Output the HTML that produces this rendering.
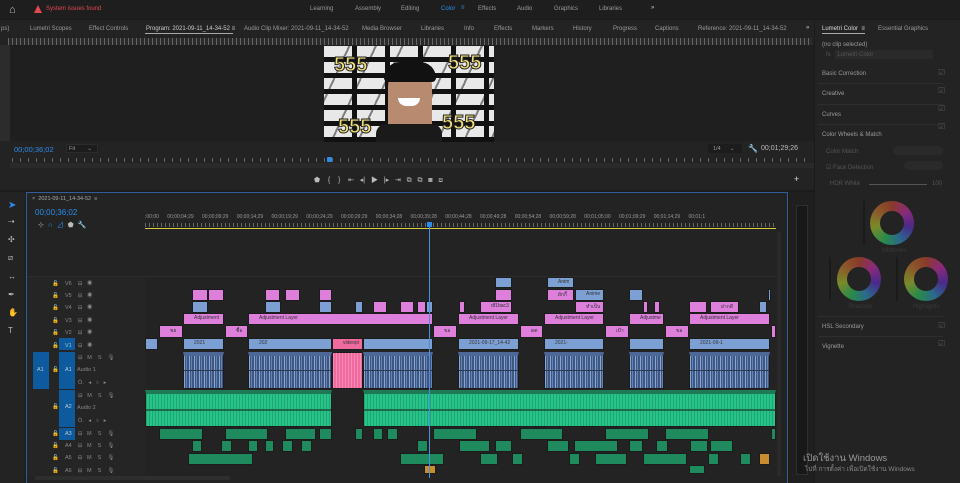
<!DOCTYPE html>
<html><head><meta charset="utf-8"><style>
*{margin:0;padding:0;box-sizing:border-box}
body{width:960px;height:483px;overflow:hidden;background:#1b1b1b;font-family:"Liberation Sans","Noto Sans CJK SC",sans-serif;color:#9a9a9a;position:relative;font-size:6px}
.a{position:absolute}
.t{position:absolute;white-space:nowrap}
.p{position:absolute;background:#de7fdc;border:1px solid #1c1c1c}
.b{position:absolute;background:#7c9fd4;border:1px solid #1c1c1c}
.ab{position:absolute;background:#3f5680;border:1px solid #1c1c1c;border-top:4px solid #4d6796;background-image:repeating-linear-gradient(90deg,rgba(140,175,225,.9) 0 1px,transparent 1px 2px,rgba(140,175,225,.5) 2px 3px,transparent 3px 5px);background-size:100% 60%;background-repeat:repeat-y}
.ab::after{content:"";position:absolute;left:0;right:0;top:45%;height:1px;background:#2a3a55}
.g{position:absolute;background:#27c48a;border:1px solid #1c1c1c;border-top:4px solid #1e7a55;background-image:repeating-linear-gradient(90deg,rgba(20,110,70,.35) 0 1px,transparent 1px 3px)}
.g::after{content:"";position:absolute;left:0;right:0;top:46%;height:2px;background:#1e6b4c}
.gs{position:absolute;background:#1f8a5e;border:1px solid #1c1c1c}
.o{position:absolute;background:#c88d2e;border:1px solid #1c1c1c}
.pk{position:absolute;background:#f06aa0;border:1px solid #1c1c1c}
.lbl{position:absolute;left:10px;top:1px;font-size:5px;color:#333;white-space:nowrap;overflow:hidden}
.hd{position:absolute;font-size:5.5px;color:#888}
.wh{position:absolute;width:44px;height:44px;border-radius:50%;background:conic-gradient(#8a3a2a,#8a2a7a,#4a2a8a,#2a6a8a,#2a8a4a,#7a8a2a,#8a5a2a,#8a3a2a)}
.wh::after{content:"";position:absolute;left:10px;top:10px;width:24px;height:24px;border-radius:50%;background:#232323}
</style></head><body>
<div class="a" style="left:0;top:0;width:960px;height:19px;background:#1e1e1e"></div>
<div class="t" style="left:9px;top:4px;font-size:11px;color:#bbb">⌂</div>
<div class="a" style="left:34px;top:5px;width:0;height:0;border-left:4px solid transparent;border-right:4px solid transparent;border-bottom:8px solid #e34850"></div>
<div class="t" style="left:46px;top:6px;color:#e34850;font-size:6px">System issues found</div>
<div class="t" style="left:310px;top:6px">Learning</div>
<div class="t" style="left:355px;top:6px">Assembly</div>
<div class="t" style="left:401px;top:6px">Editing</div>
<div class="t" style="left:441px;top:6px;color:#2d8ceb">Color</div>
<div class="t" style="left:461px;top:5px;color:#2d8ceb">≡</div>
<div class="t" style="left:478px;top:6px">Effects</div>
<div class="t" style="left:517px;top:6px">Audio</div>
<div class="t" style="left:554px;top:6px">Graphics</div>
<div class="t" style="left:599px;top:6px">Libraries</div>
<div class="t" style="left:651px;top:5px;color:#ccc">»</div>
<div class="a" style="left:0;top:20px;width:814px;height:170px;background:#232323"></div>
<div class="t" style="left:1px;top:26px">ps)</div>
<div class="t" style="left:30px;top:26px">Lumetri Scopes</div>
<div class="t" style="left:89px;top:26px">Effect Controls</div>
<div class="t" style="left:146px;top:26px;color:#ccc">Program: 2021-09-11_14-34-52 ≡</div>
<div class="a" style="left:145px;top:33px;width:88px;height:1px;background:#aaa"></div>
<div class="t" style="left:244px;top:26px">Audio Clip Mixer: 2021-09-11_14-34-52</div>
<div class="t" style="left:362px;top:26px">Media Browser</div>
<div class="t" style="left:421px;top:26px">Libraries</div>
<div class="t" style="left:464px;top:26px">Info</div>
<div class="t" style="left:494px;top:26px">Effects</div>
<div class="t" style="left:532px;top:26px">Markers</div>
<div class="t" style="left:573px;top:26px">History</div>
<div class="t" style="left:613px;top:26px">Progress</div>
<div class="t" style="left:655px;top:26px">Captions</div>
<div class="t" style="left:698px;top:26px">Reference: 2021-09-11_14-34-52</div>
<div class="t" style="left:806px;top:25px;color:#ccc">»</div>
<div class="a" style="left:8px;top:38px;width:804px;height:7px;background:#2c2c2c;background-image:repeating-linear-gradient(90deg,#777 0 1px,transparent 1px 4px);opacity:.8"></div>
<div class="a" style="left:0;top:45px;width:10px;height:96px;background:#2c2c2c"></div>
<div class="a" style="left:10px;top:45px;width:804px;height:96px;background:#1f1f1f"></div>
<div class="a" style="left:324px;top:46px;width:170px;height:96px;background:#111;background-image:repeating-linear-gradient(90deg,#e8e8e8 0 28px,#111 28px 33px);overflow:hidden">
<div class="a" style="left:0;top:0;width:170px;height:96px;background-image:repeating-linear-gradient(180deg,transparent 0 11px,#111 11px 16px)"></div>
<div class="a" style="left:0;top:0;width:170px;height:96px;background-image:repeating-linear-gradient(115deg,transparent 0 22px,rgba(20,20,20,.5) 22px 24px)"></div>
<div class="a" style="left:64px;top:22px;width:44px;height:74px;background:#b88a70;border-radius:18px 18px 0 0"></div>
<div class="a" style="left:60px;top:16px;width:52px;height:20px;background:#111;border-radius:24px 24px 6px 6px"></div>
<div class="a" style="left:74px;top:52px;width:22px;height:8px;background:#fff;border-radius:0 0 10px 10px"></div>
<div class="a" style="left:52px;top:78px;width:66px;height:18px;background:#1a1a1a;border-radius:10px 10px 0 0"></div>
<div class="t" style="left:10px;top:8px;font-size:20px;font-weight:bold;color:#f3e27a;-webkit-text-stroke:1px #222">555</div>
<div class="t" style="left:124px;top:6px;font-size:20px;font-weight:bold;color:#f3e27a;-webkit-text-stroke:1px #222">555</div>
<div class="t" style="left:14px;top:70px;font-size:20px;font-weight:bold;color:#f3e27a;-webkit-text-stroke:1px #222">555</div>
<div class="t" style="left:118px;top:66px;font-size:20px;font-weight:bold;color:#f3e27a;-webkit-text-stroke:1px #222">555</div>
</div>
<div class="t" style="left:14px;top:145px;font-size:7.5px;color:#2d8ceb">00;00;36;02</div>
<div class="a" style="left:66px;top:144px;width:32px;height:9px;background:#1c1c1c;border:1px solid #2b2b2b"></div>
<div class="t" style="left:69px;top:146px;font-size:5.5px">Fit &nbsp; &nbsp; &nbsp; &nbsp;⌄</div>
<div class="a" style="left:708px;top:144px;width:34px;height:9px;background:#1c1c1c"></div>
<div class="t" style="left:713px;top:146px;font-size:5.5px">1/4 &nbsp; &nbsp; &nbsp;⌄</div>
<div class="t" style="left:748px;top:144px;font-size:8px;color:#bbb">🔧</div>
<div class="t" style="left:761px;top:145px;font-size:7px;color:#bbb">00;01;29;26</div>
<div class="a" style="left:12px;top:158px;width:800px;height:4px;background-image:repeating-linear-gradient(90deg,#666 0 1px,transparent 1px 8px)"></div>
<div class="a" style="left:10px;top:163px;width:804px;height:5px;background:#2a2a2a"></div>
<div class="a" style="left:327px;top:157px;width:5px;height:5px;background:#2d8ceb;border-radius:1px"></div>
<div class="t" style="left:314px;top:175px;font-size:7px;color:#bbb">⬟&nbsp;&nbsp;&nbsp;&nbsp;{&nbsp;&nbsp;&nbsp;&nbsp;}&nbsp;&nbsp;&nbsp;&nbsp;⇤&nbsp;&nbsp;&nbsp;◂|&nbsp;&nbsp;&nbsp;▶&nbsp;&nbsp;&nbsp;|▸&nbsp;&nbsp;&nbsp;⇥&nbsp;&nbsp;&nbsp;⧉&nbsp;&nbsp;&nbsp;⧉&nbsp;&nbsp;&nbsp;◙&nbsp;&nbsp;&nbsp;⧈</div>
<div class="t" style="left:794px;top:174px;font-size:9px;color:#ddd">+</div>
<div class="a" style="left:0;top:192px;width:25px;height:291px;background:#232323"></div>
<div class="t" style="left:8px;top:200px;font-size:10px;color:#2d8ceb">➤</div>
<div class="t" style="left:8px;top:217px;font-size:8px;color:#bbb">⇢<br><br>✣<br><br>⧄<br><br>↔<br><br>✒<br><br>✋<br><br>T</div>
<div class="a" style="left:26px;top:192px;width:762px;height:291px;background:#232323;border:1px solid #2f5f9a;border-bottom:none"></div>
<div class="t" style="left:32px;top:196px;font-size:5.5px;color:#aaa">× &nbsp;2021-09-11_14-34-52 &nbsp;≡</div>
<div class="t" style="left:35px;top:208px;font-size:8px;color:#2d8ceb">00;00;36;02</div>
<div class="t" style="left:38px;top:220px;font-size:7px;color:#bbb">⊹ &nbsp;<span style="color:#2d8ceb">∩ &nbsp;⊿</span> &nbsp;⬟ &nbsp;🔧</div>
<div class="a" style="left:145px;top:207px;width:631px;height:22px;background:#232323"></div>
<div class="t" style="left:145px;top:214px;font-size:5px">;00;00&nbsp;&nbsp;&nbsp;&nbsp;&nbsp;&nbsp;00;00;04;29&nbsp;&nbsp;&nbsp;&nbsp;&nbsp;&nbsp;00;00;09;29&nbsp;&nbsp;&nbsp;&nbsp;&nbsp;&nbsp;00;00;14;29&nbsp;&nbsp;&nbsp;&nbsp;&nbsp;&nbsp;00;00;19;29&nbsp;&nbsp;&nbsp;&nbsp;&nbsp;&nbsp;00;00;24;29&nbsp;&nbsp;&nbsp;&nbsp;&nbsp;&nbsp;00;00;29;29&nbsp;&nbsp;&nbsp;&nbsp;&nbsp;&nbsp;00;00;34;28&nbsp;&nbsp;&nbsp;&nbsp;&nbsp;&nbsp;00;00;39;28&nbsp;&nbsp;&nbsp;&nbsp;&nbsp;&nbsp;00;00;44;28&nbsp;&nbsp;&nbsp;&nbsp;&nbsp;&nbsp;00;00;49;28&nbsp;&nbsp;&nbsp;&nbsp;&nbsp;&nbsp;00;00;54;28&nbsp;&nbsp;&nbsp;&nbsp;&nbsp;&nbsp;00;00;59;28&nbsp;&nbsp;&nbsp;&nbsp;&nbsp;&nbsp;00;01;05;00&nbsp;&nbsp;&nbsp;&nbsp;&nbsp;&nbsp;00;01;09;29&nbsp;&nbsp;&nbsp;&nbsp;&nbsp;&nbsp;00;01;14;29&nbsp;&nbsp;&nbsp;&nbsp;&nbsp;&nbsp;00;01;1</div>
<div class="a" style="left:145px;top:223px;width:631px;height:4px;background-image:repeating-linear-gradient(90deg,#666 0 1px,transparent 1px 4px)"></div>
<div class="a" style="left:145px;top:228px;width:631px;height:1px;background:#d8cc3a"></div>
<div class="a" style="left:27px;top:276px;width:118px;height:202px;background:#252525"></div>
<div class="a" style="left:27px;top:276px;width:749px;height:1px;background:#2c2c2c"></div>
<div class="hd" style="left:52px;top:279px">🔓 &nbsp; &nbsp;V6 &nbsp; &nbsp;⊟ &nbsp; ◉</div>
<div class="hd" style="left:52px;top:291px">🔓 &nbsp; &nbsp;V5 &nbsp; &nbsp;⊟ &nbsp; ◉</div>
<div class="hd" style="left:52px;top:303px">🔓 &nbsp; &nbsp;V4 &nbsp; &nbsp;⊟ &nbsp; ◉</div>
<div class="hd" style="left:52px;top:316px">🔓 &nbsp; &nbsp;V3 &nbsp; &nbsp;⊟ &nbsp; ◉</div>
<div class="hd" style="left:52px;top:328px">🔓 &nbsp; &nbsp;V2 &nbsp; &nbsp;⊟ &nbsp; ◉</div>
<div class="a" style="left:59px;top:338px;width:16px;height:12px;background:#0d5a9e"></div>
<div class="hd" style="left:52px;top:341px">🔓 &nbsp; &nbsp;<span style="color:#9cc">V1</span> &nbsp; &nbsp;⊟ &nbsp; ◉</div>
<div class="a" style="left:33px;top:352px;width:16px;height:37px;background:#0d5a9e"></div>
<div class="a" style="left:59px;top:352px;width:16px;height:37px;background:#0d5a9e"></div>
<div class="a" style="left:59px;top:390px;width:16px;height:37px;background:#0d5a9e"></div>
<div class="a" style="left:59px;top:428px;width:16px;height:12px;background:#0d5a9e"></div>
<div class="hd" style="left:37px;top:367px;color:#bcd">A1</div>
<div class="hd" style="left:52px;top:367px">🔓 &nbsp; &nbsp;<span style="color:#bcd">A1</span></div>
<div class="hd" style="left:78px;top:355px">⊟ &nbsp; M &nbsp; &nbsp;S &nbsp; &nbsp;🎙</div>
<div class="hd" style="left:77px;top:367px">Audio 1</div>
<div class="hd" style="left:78px;top:380px">Ö. &nbsp; ◂ &nbsp; ○ &nbsp; ▸</div>
<div class="hd" style="left:52px;top:404px">🔓 &nbsp; &nbsp;<span style="color:#bcd">A2</span></div>
<div class="hd" style="left:78px;top:393px">⊟ &nbsp; M &nbsp; &nbsp;S &nbsp; &nbsp;🎙</div>
<div class="hd" style="left:77px;top:405px">Audio 2</div>
<div class="hd" style="left:78px;top:418px">Ö. &nbsp; ◂ &nbsp; ○ &nbsp; ▸</div>
<div class="hd" style="left:52px;top:431px">🔓 &nbsp; &nbsp;<span style="color:#bcd">A3</span> &nbsp; &nbsp;⊟ &nbsp; M &nbsp; &nbsp;S &nbsp; &nbsp;🎙</div>
<div class="hd" style="left:52px;top:443px">🔓 &nbsp; &nbsp;A4 &nbsp; &nbsp;⊟ &nbsp; M &nbsp; &nbsp;S &nbsp; &nbsp;🎙</div>
<div class="hd" style="left:52px;top:455px">🔓 &nbsp; &nbsp;A5 &nbsp; &nbsp;⊟ &nbsp; M &nbsp; &nbsp;S &nbsp; &nbsp;🎙</div>
<div class="hd" style="left:52px;top:468px">🔓 &nbsp; &nbsp;A6 &nbsp; &nbsp;⊟ &nbsp; M &nbsp; &nbsp;S &nbsp; &nbsp;🎙</div>
<div class="a" style="left:35px;top:476px;width:195px;height:4px;background:#2e2e2e;border-radius:2px"></div>
<div class="b" style="left:495px;top:277px;width:17px;height:11px"></div>
<div class="b" style="left:547px;top:277px;width:27px;height:11px"><span class="lbl">Anim</span></div>
<div class="p" style="left:192px;top:289px;width:16px;height:12px"></div>
<div class="p" style="left:208px;top:289px;width:16px;height:12px"></div>
<div class="p" style="left:265px;top:289px;width:15px;height:12px"></div>
<div class="p" style="left:285px;top:289px;width:15px;height:12px"></div>
<div class="p" style="left:319px;top:289px;width:13px;height:12px"></div>
<div class="p" style="left:495px;top:289px;width:17px;height:12px"></div>
<div class="p" style="left:547px;top:289px;width:27px;height:12px"><span class="lbl">ผักกี้</span></div>
<div class="b" style="left:575px;top:289px;width:29px;height:12px"><span class="lbl">Anime</span></div>
<div class="b" style="left:629px;top:289px;width:14px;height:12px"></div>
<div class="b" style="left:768px;top:289px;width:3px;height:12px"></div>
<div class="b" style="left:192px;top:301px;width:16px;height:12px"></div>
<div class="b" style="left:265px;top:301px;width:16px;height:12px"></div>
<div class="b" style="left:319px;top:301px;width:13px;height:12px"></div>
<div class="b" style="left:355px;top:301px;width:8px;height:12px"></div>
<div class="p" style="left:373px;top:301px;width:14px;height:12px"></div>
<div class="p" style="left:400px;top:301px;width:14px;height:12px"></div>
<div class="p" style="left:417px;top:301px;width:9px;height:12px"></div>
<div class="b" style="left:426px;top:301px;width:7px;height:12px"></div>
<div class="p" style="left:459px;top:301px;width:6px;height:12px"></div>
<div class="p" style="left:480px;top:301px;width:32px;height:12px"><span class="lbl">df1bac3</span></div>
<div class="p" style="left:575px;top:301px;width:29px;height:12px"><span class="lbl">ทำเป็น</span></div>
<div class="p" style="left:643px;top:301px;width:5px;height:12px"></div>
<div class="p" style="left:654px;top:301px;width:6px;height:12px"></div>
<div class="p" style="left:689px;top:301px;width:18px;height:12px"></div>
<div class="p" style="left:710px;top:301px;width:29px;height:12px"><span class="lbl">ฝากดี</span></div>
<div class="b" style="left:759px;top:301px;width:8px;height:12px"></div>
<div class="p" style="left:183px;top:313px;width:41px;height:12px"><span class="lbl">Adjustment</span></div>
<div class="p" style="left:248px;top:313px;width:185px;height:12px"><span class="lbl">Adjustment Layer</span></div>
<div class="p" style="left:458px;top:313px;width:61px;height:12px"><span class="lbl">Adjustment Layer</span></div>
<div class="p" style="left:544px;top:313px;width:60px;height:12px"><span class="lbl">Adjustment Layer</span></div>
<div class="p" style="left:629px;top:313px;width:35px;height:12px"><span class="lbl">Adjustme</span></div>
<div class="p" style="left:689px;top:313px;width:81px;height:12px"><span class="lbl">Adjustment Layer</span></div>
<div class="p" style="left:159px;top:325px;width:24px;height:13px"><span class="lbl">ขย</span></div>
<div class="p" style="left:225px;top:325px;width:23px;height:13px"><span class="lbl">ซื้อ</span></div>
<div class="p" style="left:433px;top:325px;width:24px;height:13px"><span class="lbl">ขอ</span></div>
<div class="p" style="left:520px;top:325px;width:23px;height:13px"><span class="lbl">ดต</span></div>
<div class="p" style="left:605px;top:325px;width:24px;height:13px"><span class="lbl">เป้า</span></div>
<div class="p" style="left:665px;top:325px;width:24px;height:13px"><span class="lbl">ขอ</span></div>
<div class="p" style="left:771px;top:325px;width:5px;height:13px"></div>
<div class="b" style="left:145px;top:338px;width:13px;height:12px"></div>
<div class="b" style="left:183px;top:338px;width:41px;height:12px"><span class="lbl">2021</span></div>
<div class="b" style="left:248px;top:338px;width:84px;height:12px"><span class="lbl">202</span></div>
<div class="pk" style="left:332px;top:338px;width:31px;height:12px"><span class="lbl">videopl</span></div>
<div class="b" style="left:363px;top:338px;width:70px;height:12px"></div>
<div class="b" style="left:458px;top:338px;width:61px;height:12px"><span class="lbl">2021-09-17_14-42</span></div>
<div class="b" style="left:544px;top:338px;width:60px;height:12px"><span class="lbl">2021-</span></div>
<div class="b" style="left:629px;top:338px;width:35px;height:12px"></div>
<div class="b" style="left:689px;top:338px;width:81px;height:12px"><span class="lbl">2021-09-1</span></div>
<div class="ab" style="left:183px;top:352px;width:41px;height:37px"></div>
<div class="ab" style="left:248px;top:352px;width:84px;height:37px"></div>
<div class="pk" style="left:332px;top:352px;width:31px;height:37px;background-image:repeating-linear-gradient(90deg,#f58ab5 0 1px,#f06aa0 1px 3px)"></div>
<div class="ab" style="left:363px;top:352px;width:70px;height:37px"></div>
<div class="ab" style="left:458px;top:352px;width:61px;height:37px"></div>
<div class="ab" style="left:544px;top:352px;width:60px;height:37px"></div>
<div class="ab" style="left:629px;top:352px;width:35px;height:37px"></div>
<div class="ab" style="left:689px;top:352px;width:81px;height:37px"></div>
<div class="g" style="left:145px;top:390px;width:187px;height:37px"></div>
<div class="g" style="left:363px;top:390px;width:413px;height:37px"></div>
<div class="gs" style="left:159px;top:428px;width:44px;height:12px"></div>
<div class="gs" style="left:225px;top:428px;width:43px;height:12px"></div>
<div class="gs" style="left:285px;top:428px;width:31px;height:12px"></div>
<div class="gs" style="left:319px;top:428px;width:13px;height:12px"></div>
<div class="gs" style="left:355px;top:428px;width:8px;height:12px"></div>
<div class="gs" style="left:373px;top:428px;width:10px;height:12px"></div>
<div class="gs" style="left:387px;top:428px;width:11px;height:12px"></div>
<div class="gs" style="left:433px;top:428px;width:44px;height:12px"></div>
<div class="gs" style="left:520px;top:428px;width:43px;height:12px"></div>
<div class="gs" style="left:605px;top:428px;width:44px;height:12px"></div>
<div class="gs" style="left:665px;top:428px;width:44px;height:12px"></div>
<div class="gs" style="left:771px;top:428px;width:5px;height:12px"></div>
<div class="gs" style="left:192px;top:440px;width:10px;height:12px"></div>
<div class="gs" style="left:221px;top:440px;width:11px;height:12px"></div>
<div class="gs" style="left:248px;top:440px;width:10px;height:12px"></div>
<div class="gs" style="left:265px;top:440px;width:9px;height:12px"></div>
<div class="gs" style="left:282px;top:440px;width:11px;height:12px"></div>
<div class="gs" style="left:301px;top:440px;width:11px;height:12px"></div>
<div class="gs" style="left:417px;top:440px;width:11px;height:12px"></div>
<div class="gs" style="left:459px;top:440px;width:31px;height:12px"></div>
<div class="gs" style="left:495px;top:440px;width:17px;height:12px"></div>
<div class="gs" style="left:547px;top:440px;width:22px;height:12px"></div>
<div class="gs" style="left:574px;top:440px;width:44px;height:12px"></div>
<div class="gs" style="left:629px;top:440px;width:14px;height:12px"></div>
<div class="gs" style="left:656px;top:440px;width:12px;height:12px"></div>
<div class="gs" style="left:690px;top:440px;width:18px;height:12px"></div>
<div class="gs" style="left:710px;top:440px;width:23px;height:12px"></div>
<div class="gs" style="left:188px;top:453px;width:65px;height:12px"></div>
<div class="gs" style="left:400px;top:453px;width:44px;height:12px"></div>
<div class="gs" style="left:480px;top:453px;width:18px;height:12px"></div>
<div class="gs" style="left:512px;top:453px;width:11px;height:12px"></div>
<div class="gs" style="left:569px;top:453px;width:11px;height:12px"></div>
<div class="gs" style="left:595px;top:453px;width:32px;height:12px"></div>
<div class="gs" style="left:643px;top:453px;width:44px;height:12px"></div>
<div class="gs" style="left:708px;top:453px;width:11px;height:12px"></div>
<div class="gs" style="left:740px;top:453px;width:11px;height:12px"></div>
<div class="o" style="left:759px;top:453px;width:11px;height:12px"></div>
<div class="o" style="left:424px;top:465px;width:12px;height:9px"></div>
<div class="gs" style="left:689px;top:465px;width:16px;height:9px"></div>
<div class="a" style="left:429px;top:222px;width:1px;height:256px;background:#4a90e2"></div>
<div class="a" style="left:427px;top:222px;width:5px;height:5px;background:#2d8ceb"></div>
<div class="a" style="left:777px;top:232px;width:4px;height:244px;background:#2a2a2a"></div>
<div class="a" style="left:789px;top:192px;width:25px;height:291px;background:#1f1f1f"></div>
<div class="a" style="left:796px;top:205px;width:12px;height:270px;border:1px solid #2e2e2e;background:#181818"></div>
<div class="a" style="left:815px;top:20px;width:145px;height:463px;background:#232323"></div>
<div class="t" style="left:822px;top:26px;color:#ddd">Lumetri Color &nbsp;≡</div>
<div class="a" style="left:822px;top:33px;width:43px;height:1px;background:#aaa"></div>
<div class="t" style="left:878px;top:26px">Essential Graphics</div>
<div class="t" style="left:822px;top:42px">(no clip selected)</div>
<div class="a" style="left:835px;top:50px;width:98px;height:9px;background:#2a2a2a"></div>
<div class="t" style="left:826px;top:52px;color:#555">fx &nbsp; &nbsp;Lumetri Color</div>
<div class="t" style="left:822px;top:71px">Basic Correction</div>
<div class="t" style="left:822px;top:91px">Creative</div>
<div class="t" style="left:822px;top:112px">Curves</div>
<div class="t" style="left:822px;top:132px">Color Wheels &amp; Match</div>
<div class="t" style="left:938px;top:68px;color:#555;font-size:8px">☑<br><br>☑<br><br>☑<br><br>☑</div>
<div class="a" style="left:818px;top:83px;width:125px;height:1px;background:#2e2e2e"></div>
<div class="a" style="left:818px;top:104px;width:125px;height:1px;background:#2e2e2e"></div>
<div class="a" style="left:818px;top:124px;width:125px;height:1px;background:#2e2e2e"></div>
<div class="t" style="left:826px;top:149px;color:#555">Color Match</div>
<div class="a" style="left:893px;top:146px;width:50px;height:9px;border-radius:5px;background:#2a2a2a"></div>
<div class="t" style="left:826px;top:164px;color:#555">☑ Face Detection</div>
<div class="a" style="left:904px;top:161px;width:39px;height:9px;border-radius:5px;background:#2a2a2a"></div>
<div class="t" style="left:830px;top:181px;color:#555">HDR White</div>
<div class="a" style="left:869px;top:184px;width:58px;height:1px;background:#555"></div>
<div class="t" style="left:932px;top:181px;color:#555">100</div>
<div class="wh" style="left:870px;top:201px"></div>
<div class="wh" style="left:837px;top:257px"></div>
<div class="wh" style="left:904px;top:257px"></div>
<div class="a" style="left:863px;top:201px;width:2px;height:44px;background:#1a1a1a"></div>
<div class="a" style="left:829px;top:257px;width:2px;height:44px;background:#1a1a1a"></div>
<div class="a" style="left:896px;top:257px;width:2px;height:44px;background:#1a1a1a"></div>
<div class="t" style="left:882px;top:248px;color:#3a3a3a">Midtones</div>
<div class="t" style="left:848px;top:304px;color:#3a3a3a">Shadows</div>
<div class="t" style="left:913px;top:304px;color:#3a3a3a">Highlights</div>
<div class="a" style="left:818px;top:316px;width:125px;height:1px;background:#2e2e2e"></div>
<div class="t" style="left:822px;top:324px">HSL Secondary</div>
<div class="a" style="left:818px;top:336px;width:125px;height:1px;background:#2e2e2e"></div>
<div class="t" style="left:822px;top:344px">Vignette</div>
<div class="t" style="left:938px;top:321px;color:#555;font-size:8px">☑<br><br>☑</div>
<div class="t" style="left:803px;top:451px;font-size:9.5px;color:#999">เปิดใช้งาน Windows</div>
<div class="t" style="left:805px;top:464px;font-size:6.5px;color:#888">ไปที่ การตั้งค่า เพื่อเปิดใช้งาน Windows</div>
</body></html>
